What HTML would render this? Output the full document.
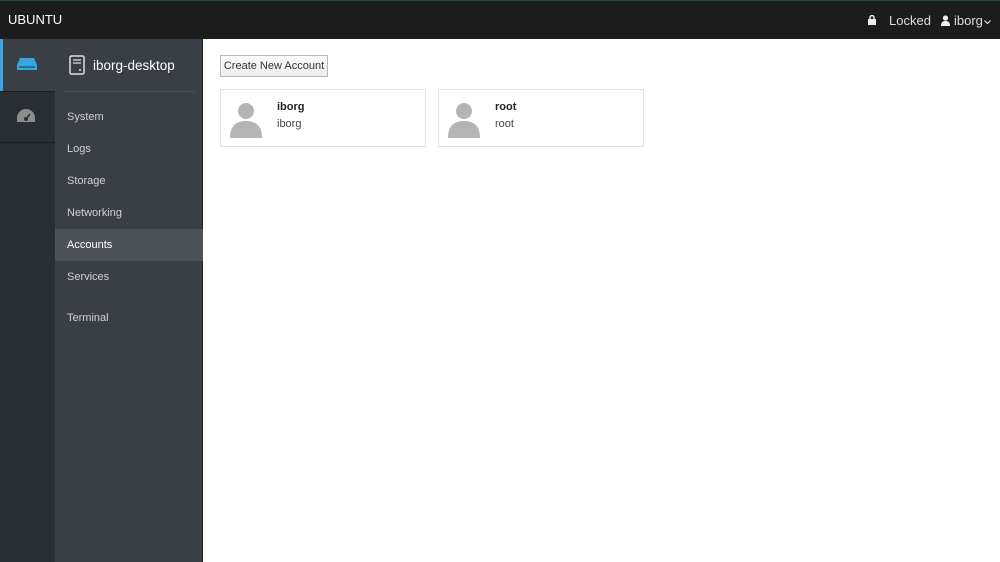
<!DOCTYPE html>
<html><head><style>
*{margin:0;padding:0;box-sizing:border-box}
body{width:1000px;height:562px;overflow:hidden;font-family:"Liberation Sans",sans-serif;background:#fff;position:relative}
.top{position:absolute;left:0;top:0;width:1000px;height:39px;background:#1c1c1c;border-top:1px solid #2a4a4a;color:#ddd;font-size:13px}
.top .brand{position:absolute;left:8px;top:11px;color:#fff}
.rail{position:absolute;left:0;top:39px;width:55px;height:523px;background:#292e34}
.rail .a{position:absolute;left:0;top:0;width:55px;height:52px;background:#393f44;border-left:3px solid #39a5dc}
.rail .b{position:absolute;left:0;top:52px;width:55px;height:52px;background:#292e34;border-bottom:1px solid #1c1f22;border-top:1px solid #1c1f22}
.nav{position:absolute;left:55px;top:39px;width:148px;height:523px;background:#393f44;border-right:1px solid #222}
.nav .host{position:absolute;left:38px;top:19px;color:#fff;font-size:13.5px}
.nav .sep{position:absolute;left:9px;top:52px;width:131px;height:1px;background:#4d5258}
.nav div.it{position:absolute;left:0;width:148px;height:32px;padding-left:12px;line-height:32px;color:#d1d1d1;font-size:11px}
.nav .act{background:#4d5258;color:#fff!important}
.btn{position:absolute;left:220px;top:55px;width:108px;height:22px;border:1px solid #bbb;background:linear-gradient(#fafafa,#ededed);font-size:11px;color:#333;text-align:center;line-height:20px}
.card{position:absolute;top:89px;width:206px;height:58px;border:1px solid #e2e2e2;background:#fff}
.card b{position:absolute;left:56px;top:11px;font-size:11px;color:#222}
.card span{position:absolute;left:56px;top:28px;font-size:11px;color:#444}
.card svg{position:absolute;left:9px;top:10px}
</style></head><body>
<div class="top"><span class="brand">UBUNTU</span>
<svg style="position:absolute;left:868px;top:14px" width="8" height="10"><rect x="0" y="4" width="8" height="6" fill="#eee"/><path d="M2 4V2.5a2 2 0 0 1 4 0V4" stroke="#eee" stroke-width="1.4" fill="none"/></svg>
<span style="position:absolute;left:889px;top:12px">Locked</span>
<svg style="position:absolute;left:941px;top:14px" width="9" height="11"><circle cx="4.5" cy="3" r="2.6" fill="#eee"/><path d="M0 11c0-4 2-5 4.5-5s4.5 1 4.5 5z" fill="#eee"/></svg>
<span style="position:absolute;left:954px;top:12px">iborg</span>
<svg style="position:absolute;left:984px;top:19px" width="7" height="5"><path d="M0.5 0.5L3.5 3.5L6.5 0.5" stroke="#ddd" fill="none" stroke-width="1.2"/></svg></div>
<div class="rail"><div class="a"><svg style="position:absolute;left:14px;top:19px" width="20" height="12"><path d="M3 0h14l3 7v5H0V7z" fill="#39a5dc"/><rect x="2" y="8" width="16" height="2" fill="#1f6f9a"/></svg></div>
<div class="b"><svg style="position:absolute;left:16px;top:16px" width="20" height="16"><path d="M10 1a9 9 0 0 0-9 9v4h18v-4a9 9 0 0 0-9-9z" fill="#8b8d8f"/><circle cx="10" cy="11" r="2" fill="#292e34"/><path d="M10 11L14 6" stroke="#292e34" stroke-width="1.5"/></svg></div></div>
<div class="nav">
<svg style="position:absolute;left:14px;top:16px" width="16" height="20"><rect x="1" y="1" width="14" height="18" rx="1.5" fill="none" stroke="#ddd" stroke-width="1.5"/><path d="M4 5h8M4 8h8" stroke="#ddd" stroke-width="1.3"/><circle cx="11" cy="15" r="1" fill="#ddd"/></svg>
<div class="host">iborg-desktop</div><div class="sep"></div>
<div class="it" style="top:62px">System</div>
<div class="it" style="top:94px">Logs</div>
<div class="it" style="top:126px">Storage</div>
<div class="it" style="top:158px">Networking</div>
<div class="it act" style="top:190px">Accounts</div>
<div class="it" style="top:222px">Services</div>
<div class="it" style="top:263px">Terminal</div>
</div>
<div class="btn">Create New Account</div>
<div class="card" style="left:220px"><svg width="32" height="38"><circle cx="16" cy="11" r="8" fill="#b4b4b4"/><path d="M0 38c0-12 6-17 16-17s16 5 16 17z" fill="#b4b4b4"/></svg><b>iborg</b><span>iborg</span></div>
<div class="card" style="left:438px"><svg width="32" height="38"><circle cx="16" cy="11" r="8" fill="#b4b4b4"/><path d="M0 38c0-12 6-17 16-17s16 5 16 17z" fill="#b4b4b4"/></svg><b>root</b><span>root</span></div>
</body></html>
